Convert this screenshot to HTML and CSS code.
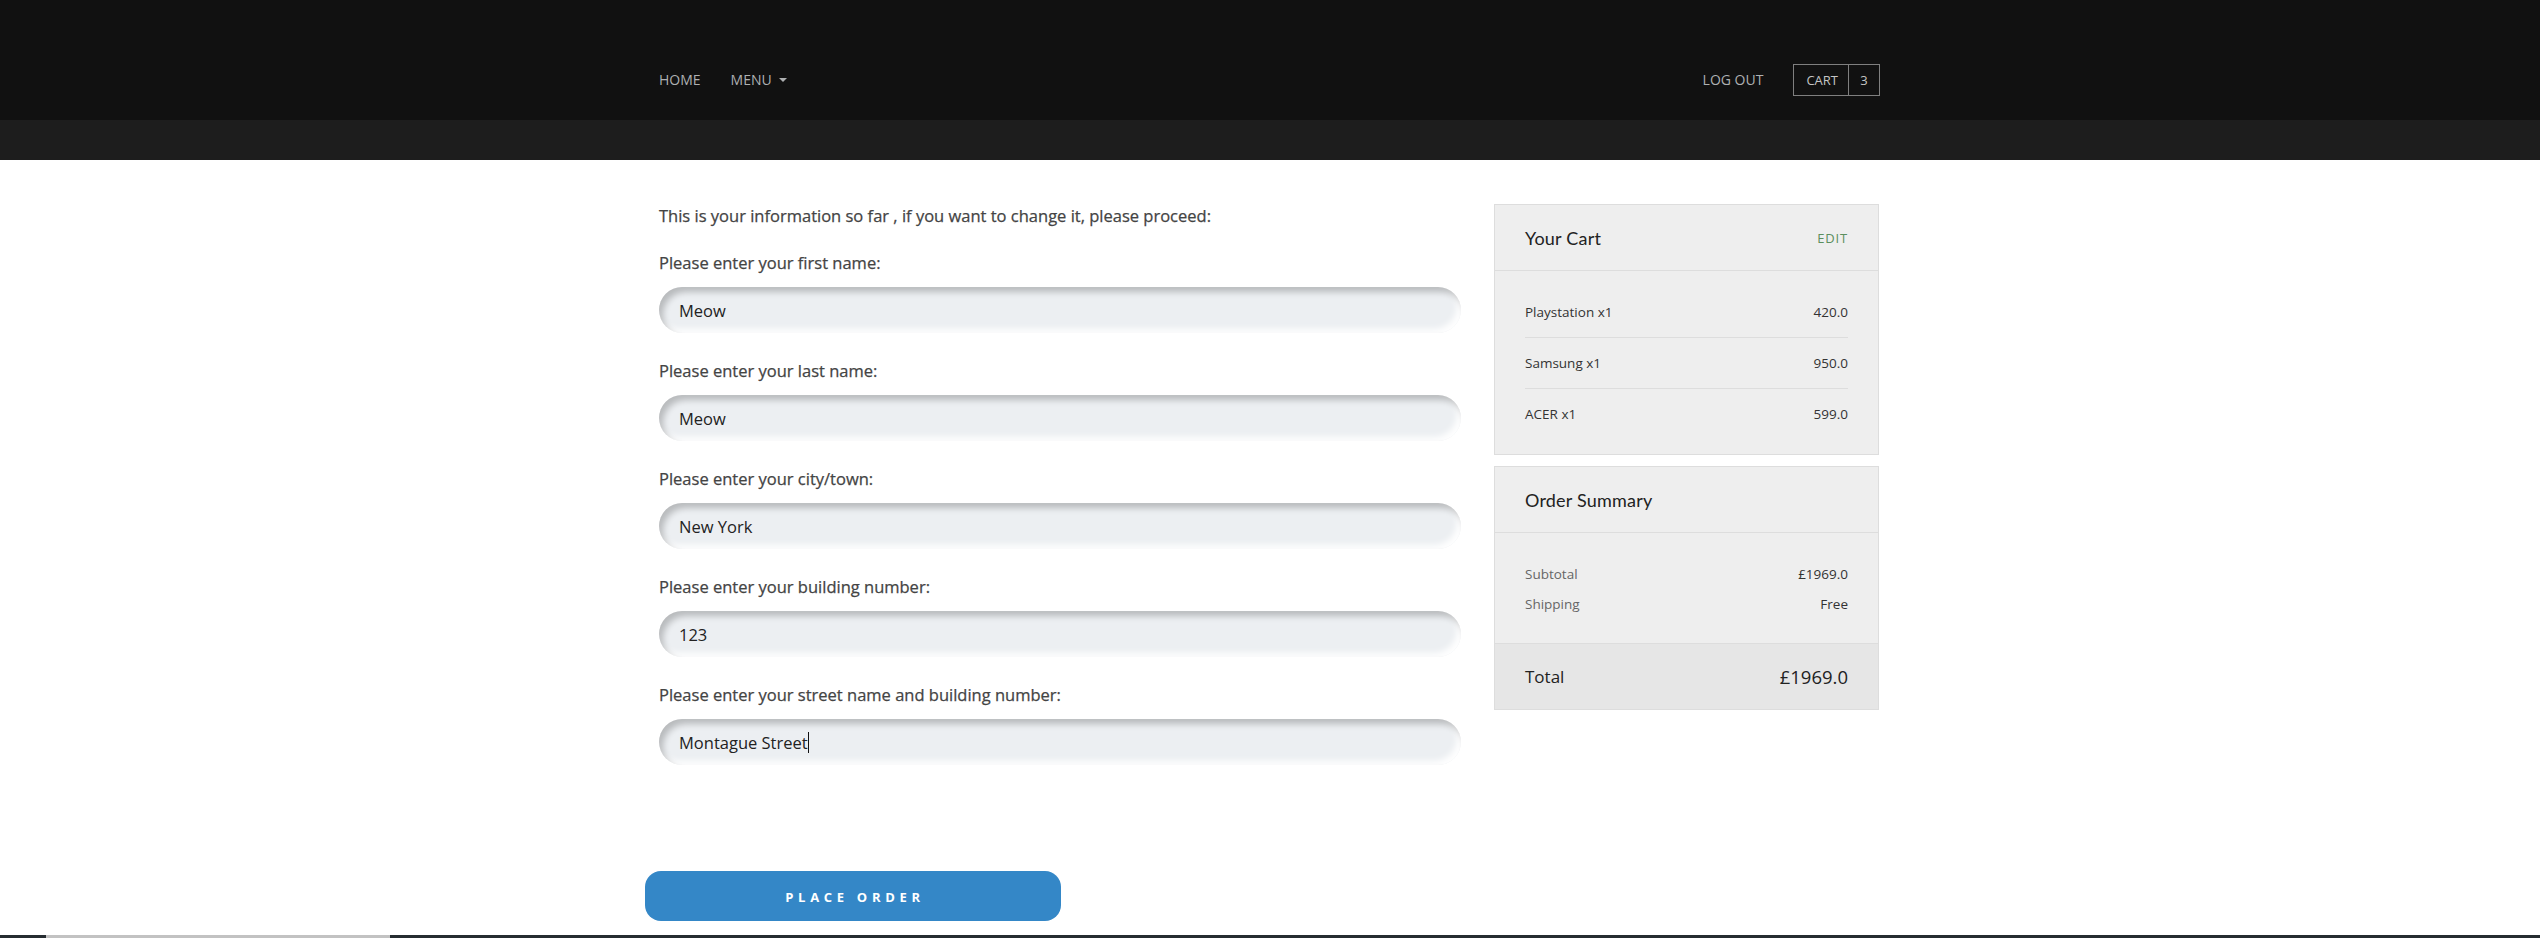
FILE: index.html
```html
<!DOCTYPE html>
<html lang="en">
<head>
<meta charset="utf-8">
<title>Checkout</title>
<link rel="stylesheet" href="styles.css">
</head>
<body>
<header class="topbar">
  <div class="wrap nav">
    <div class="nav-left">
      <a class="nav-link" href="#">HOME</a>
      <a class="nav-link" href="#">MENU <span class="caret"></span></a>
    </div>
    <div class="nav-right">
      <a class="nav-link" href="#">LOG OUT</a>
      <a class="cart-box" href="#"><span class="cart-label">CART</span><span class="cart-count">3</span></a>
    </div>
  </div>
</header>
<div class="subbar"></div>

<main class="wrap main">
  <section class="form-col">
    <p class="intro">This is your information so far , if you want to change it, please proceed:</p>
    <div class="field">
      <label class="label">Please enter your first name:</label>
      <div class="input">Meow</div>
    </div>
    <div class="field">
      <label class="label">Please enter your last name:</label>
      <div class="input">Meow</div>
    </div>
    <div class="field">
      <label class="label">Please enter your city/town:</label>
      <div class="input">New York</div>
    </div>
    <div class="field">
      <label class="label">Please enter your building number:</label>
      <div class="input">123</div>
    </div>
    <div class="field">
      <label class="label">Please enter your street name and building number:</label>
      <div class="input">Montague Street<span class="text-caret"></span></div>
    </div>
    <button class="place-order">PLACE ORDER</button>
  </section>

  <aside class="side-col">
    <div class="card">
      <div class="card-head">
        <span class="card-title">Your Cart</span>
        <a class="edit" href="#">EDIT</a>
      </div>
      <ul class="items">
        <li class="item"><span>Playstation x1</span><span>420.0</span></li>
        <li class="item"><span>Samsung x1</span><span>950.0</span></li>
        <li class="item"><span>ACER x1</span><span>599.0</span></li>
      </ul>
    </div>
    <div class="card">
      <div class="card-head">
        <span class="card-title">Order Summary</span>
      </div>
      <div class="summary">
        <div class="sum-row"><span class="sum-key">Subtotal</span><span class="sum-val">£1969.0</span></div>
        <div class="sum-row"><span class="sum-key">Shipping</span><span class="sum-val">Free</span></div>
      </div>
      <div class="total"><span>Total</span><span>£1969.0</span></div>
    </div>
  </aside>
</main>

<footer class="footer"><div class="footer-seg"></div></footer>
</body>
</html>
```

FILE: styles.css
```css
* { box-sizing: border-box; }
html, body { margin: 0; padding: 0; }
body {
  font-family: "Open Sans", "Liberation Sans", sans-serif;
  background: #ffffff;
  color: #333;
}
a { text-decoration: none; }

.wrap {
  width: 1221px;
  margin: 0 0 0 659px;
}

.topbar { background: #111111; height: 120px; }
.nav {
  height: 120px;
  display: flex;
  align-items: center;
  justify-content: space-between;
  padding-top: 40px;
}
.nav-left, .nav-right { display: flex; align-items: center; gap: 30px; }
.nav-link {
  color: #aeb0b2;
  font-size: 14px;
  line-height: 20px;
  display: inline-flex;
  align-items: center;
}
.caret {
  display: inline-block;
  width: 0; height: 0;
  margin-left: 7px;
  border-left: 4px solid transparent;
  border-right: 4px solid transparent;
  border-top: 4px solid #aeb0b2;
}
.cart-box {
  display: flex;
  height: 32px;
  border: 1px solid #7f7f7f;
  color: #c4c4c4;
  font-size: 13px;
  align-items: stretch;
}
.cart-label {
  display: flex; align-items: center;
  padding: 0 10px 0 12px;
  border-right: 1px solid #7f7f7f;
}
.cart-count {
  display: flex; align-items: center; justify-content: center;
  width: 30px;
}
.subbar { background: #1d1d1d; height: 40px; }

.main {
  display: flex;
  align-items: flex-start;
  gap: 33px;
  padding-top: 45px;
}
.form-col { width: 802px; }
.intro, .label {
  font-size: 16.5px;
  font-weight: 400;
  color: #444;
  line-height: 22px;
  margin: 0;
  -webkit-text-stroke: 0.25px #444;
}
.intro { margin-bottom: 25px; }
.label { display: block; margin-bottom: 13px; }
.field { margin-bottom: 27px; }
.input {
  height: 46px;
  border-radius: 23px;
  background: #eceff2;
  box-shadow: inset 4px 5px 6px rgba(0,0,0,0.22), inset -4px -4px 6px rgba(255,255,255,0.95);
  font-size: 16.5px;
  color: #222;
  padding: 0 20px;
  display: flex;
  align-items: center;
}
.text-caret {
  display: inline-block;
  width: 1px;
  height: 21px;
  background: #111;
}
.place-order {
  margin: 79px 0 0 -14px;
  width: 416px;
  height: 50px;
  border: none;
  border-radius: 16px;
  background: #3487c7;
  color: #fff;
  font-family: "Open Sans", "Liberation Sans", sans-serif;
  font-weight: 700;
  font-size: 13px;
  letter-spacing: 4.7px;
  padding: 2px 0 0 4px;
}

.side-col { width: 385px; display: flex; flex-direction: column; gap: 11px; margin-top: -1px; }
.card {
  background: #eeeeee;
  border: 1px solid #dddddd;
}
.card-head {
  height: 66px;
  border-bottom: 1px solid #dddddd;
  padding: 0 30px;
  display: flex;
  align-items: center;
  justify-content: space-between;
}
.card-title {
  font-family: "Lato", "Open Sans", sans-serif;
  font-size: 18px;
  color: #222;
  letter-spacing: 0.2px;
}
.edit {
  font-size: 13px;
  letter-spacing: 0.8px;
  color: #5b8f5e;
}
.items {
  list-style: none;
  margin: 0;
  padding: 16px 30px 15px;
}
.item {
  display: flex;
  justify-content: space-between;
  align-items: center;
  height: 51px;
  font-size: 13.5px;
  color: #333;
  border-bottom: 1px solid #dddddd;
}
.item:last-child { border-bottom: none; height: 50px; }
.summary { padding: 30px 30px 28px; }
.sum-row {
  display: flex;
  justify-content: space-between;
  line-height: 22px;
  font-size: 13.5px;
}
.sum-row + .sum-row { margin-top: 8px; }
.sum-key { color: #666; }
.sum-val { color: #333; }
.total {
  background: #e6e6e6;
  border-top: 1px solid #dddddd;
  height: 66px;
  padding: 0 30px;
  display: flex;
  align-items: center;
  justify-content: space-between;
  font-size: 17px;
  color: #222;
}
.total span:last-child { font-size: 18.5px; }

.footer {
  margin-top: 14px;
  height: 40px;
  background: #262d31;
}
.footer-seg {
  margin-left: 46px;
  width: 344px;
  height: 3px;
  background: #c2c2c2;
}
```
